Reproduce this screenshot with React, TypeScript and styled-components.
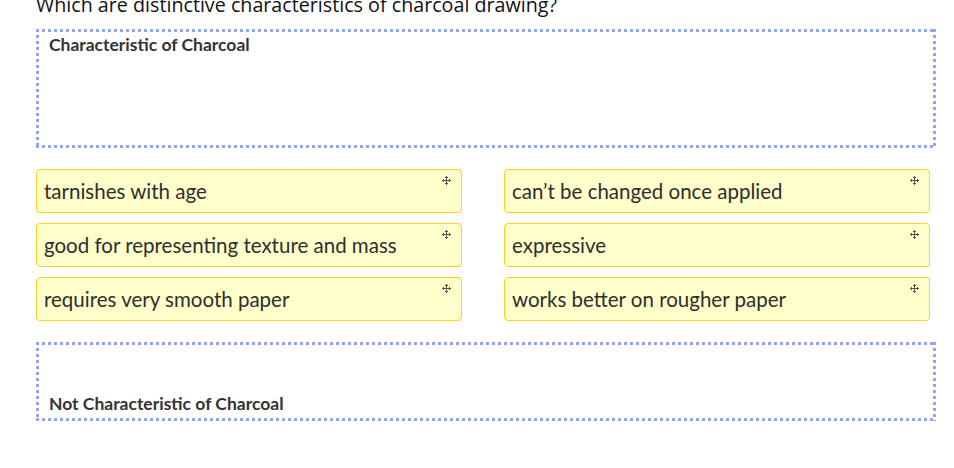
import styled, { createGlobalStyle } from 'styled-components';

const GlobalStyle = createGlobalStyle`
  body {
    margin: 0;
    background: #fff;
    font-family: Lato, 'Noto Sans', sans-serif;
    color: #333;
  }
`;

const leftItems = [
  'tarnishes with age',
  'good for representing texture and mass',
  'requires very smooth paper',
];
const rightItems = [
  'can’t be changed once applied',
  'expressive',
  'works better on rougher paper',
];

function MoveIcon() {
  return (
    <svg width="9" height="9" viewBox="0 0 9 9" fill="#555">
      <rect x="4" y="1" width="1" height="7" />
      <rect x="1" y="4" width="7" height="1" />
      <rect x="3" y="1" width="3" height="1" />
      <rect x="3" y="7" width="3" height="1" />
      <rect x="1" y="3" width="1" height="3" />
      <rect x="7" y="3" width="1" height="3" />
      <rect x="4" y="0" width="1" height="1" />
      <rect x="4" y="8" width="1" height="1" />
      <rect x="0" y="4" width="1" height="1" />
      <rect x="8" y="4" width="1" height="1" />
    </svg>
  );
}

function ChoiceCard({ text }: { text: string }) {
  return (
    <Card>
      <CardText>{text}</CardText>
      <Handle>
        <MoveIcon />
      </Handle>
    </Card>
  );
}

export default function App() {
  return (
    <>
      <GlobalStyle />
      <Page>
        <Question>Which are distinctive characteristics of charcoal drawing?</Question>
        <DropZone height={119} align="top">
          <ZoneLabel>Characteristic of Charcoal</ZoneLabel>
        </DropZone>
        <Choices>
          <Column>
            {leftItems.map((item) => (
              <ChoiceCard key={item} text={item} />
            ))}
          </Column>
          <Column>
            {rightItems.map((item) => (
              <ChoiceCard key={item} text={item} />
            ))}
          </Column>
        </Choices>
        <DropZone height={79} align="bottom">
          <ZoneLabel>Not Characteristic of Charcoal</ZoneLabel>
        </DropZone>
      </Page>
    </>
  );
}

const dot = '#95a3f7';

const Page = styled.div`
  width: 900px;
  padding: 0 0 0 36px;
  display: flex;
  flex-direction: column;
`;

const Question = styled.h1`
  margin: -10px 0 0;
  font-family: 'Open Sans', sans-serif;
  font-weight: 400;
  font-size: 19.7px;
  line-height: 29px;
  color: #111;
  white-space: nowrap;
`;

const DropZone = styled.div<{ height: number; align: 'top' | 'bottom' }>`
  box-sizing: border-box;
  height: ${(p) => p.height}px;
  margin-top: ${(p) => (p.align === 'top' ? 10 : 21)}px;
  display: flex;
  flex-direction: column;
  justify-content: ${(p) => (p.align === 'top' ? 'flex-start' : 'flex-end')};
  padding: ${(p) => (p.align === 'top' ? '6px 13px 0' : '0 13px 7px')};
  background:
    linear-gradient(to right, ${dot} 50%, transparent 0) top left / 6px 3px repeat-x,
    linear-gradient(to right, ${dot} 50%, transparent 0) bottom left / 6px 3px repeat-x,
    linear-gradient(to bottom, ${dot} 50%, transparent 0) top left / 3px 6px repeat-y,
    linear-gradient(to bottom, ${dot} 50%, transparent 0) top right / 3px 6px repeat-y;
`;

const ZoneLabel = styled.div`
  font-family: Lato, sans-serif;
  font-weight: 700;
  font-size: 17.5px;
  line-height: 20px;
  color: #333;
`;

const Choices = styled.div`
  display: grid;
  grid-template-columns: 426px 426px;
  column-gap: 42px;
  margin-top: 21px;
`;

const Column = styled.div`
  display: flex;
  flex-direction: column;
  gap: 10px;
`;

const Card = styled.div`
  box-sizing: border-box;
  height: 44px;
  display: flex;
  align-items: center;
  justify-content: space-between;
  padding: 0 7px;
  background: #ffffcb;
  border: 1px solid #ffd21f;
  border-radius: 4px;
`;

const CardText = styled.span`
  font-family: Lato, sans-serif;
  font-size: 20.5px;
  font-weight: 400;
  color: #2e2e2e;
`;

const Handle = styled.span`
  align-self: flex-start;
  margin-top: 6px;
  margin-right: 3px;
  display: flex;
`;
